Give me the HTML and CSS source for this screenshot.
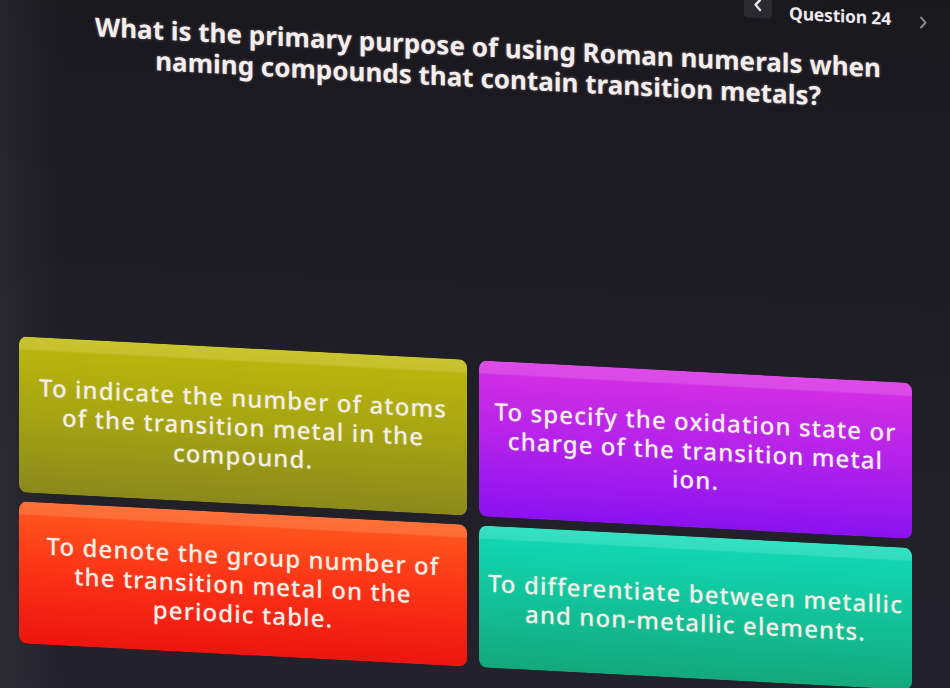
FILE: index.html
```html
<!DOCTYPE html>
<html lang="en">
<head>
<meta charset="utf-8">
<title>Question 24</title>
<link rel="stylesheet" href="styles.css">
</head>
<body>
<div class="screen">
  <header class="topbar">
    <button class="nav nav-prev" aria-label="Previous">
      <svg width="12" height="14" viewBox="0 0 12 14"><path d="M8 2 L3.5 7 L8 12" fill="none" stroke="#e8e4e8" stroke-width="2.4" stroke-linecap="round" stroke-linejoin="round"/></svg>
    </button>
    <span class="qnum">Question 24</span>
    <button class="nav nav-next" aria-label="Next">
      <svg width="12" height="14" viewBox="0 0 12 14"><path d="M4 2 L8.5 7 L4 12" fill="none" stroke="#8a8890" stroke-width="2" stroke-linecap="round" stroke-linejoin="round"/></svg>
    </button>
  </header>
  <h1 class="question">What is the primary purpose of using Roman numerals when<br>naming compounds that contain transition metals?</h1>
  <div class="answers">
    <div class="card olive"><p>To indicate the number of atoms<br>of the transition metal in the<br>compound.</p></div>
    <div class="card purple"><p>To specify the oxidation state or<br>charge of the transition metal<br>ion.</p></div>
    <div class="card red"><p>To denote the group number of<br>the transition metal on the<br>periodic table.</p></div>
    <div class="card green"><p>To differentiate between metallic<br>and non-metallic elements.</p></div>
  </div>
</div>
</body>
</html>
```
FILE: styles.css
```css
html, body {
  margin: 0;
  padding: 0;
  height: 100%;
  overflow: hidden;
  background: #1c1b21;
}
body {
  font-family: "Noto Sans", "Liberation Sans", sans-serif;
  color: #f3ece8;
}
.screen {
  width: 950px;
  height: 760px;
  background: linear-gradient(to right, rgba(60,60,66,0.35), rgba(0,0,0,0) 60px),
              linear-gradient(to bottom, #19181d 0%, #201e26 55%, #24222c 100%);
  transform: skewY(3deg);
  transform-origin: 950px 0;
  display: flex;
  flex-direction: column;
}
.topbar {
  display: flex;
  justify-content: flex-end;
  align-items: flex-start;
  height: 34px;
  padding: 11px 17px 0 0;
  box-sizing: border-box;
}
.nav {
  border: 0;
  padding: 0;
  display: flex;
  align-items: center;
  justify-content: center;
  background: transparent;
}
.nav-prev {
  width: 28px;
  height: 22px;
  border-radius: 4px;
  background: #2a2930;
  margin-right: 17px;
  margin-top: -5px;
  align-items: flex-start;
  padding-top: 2px;
  box-sizing: border-box;
}
.nav-next {
  width: 20px;
  height: 22px;
  margin-left: 22px;
  margin-top: 2px;
}
.qnum {
  font-weight: 700;
  font-size: 17.5px;
  line-height: 20px;
  color: #ece8ee;
  letter-spacing: -0.2px;
}
.question {
  margin: 22px 0 0 0;
  padding: 0 0 0 26px;
  font-size: 26px;
  line-height: 31px;
  font-weight: 700;
  text-align: center;
  white-space: nowrap;
  color: #f5eeee;
  text-shadow: 0 0 3px rgba(255,220,230,0.35);
}
.answers {
  margin-top: auto;
  margin-bottom: 68px;
  margin-left: 19px;
  display: grid;
  grid-template-columns: 448px 433px;
  grid-template-rows: 156px 142px;
  column-gap: 12px;
  row-gap: 9px;
}
.card {
  border-radius: 8px;
  display: flex;
  align-items: center;
  justify-content: center;
  padding: 0 4px;
}
.card p {
  margin: 0;
  text-align: center;
  font-size: 24px;
  line-height: 29px;
  font-weight: 500;
  letter-spacing: 1.1px;
  white-space: nowrap;
  color: #f4efe6;
  text-shadow: 0 0 2px rgba(255,255,255,0.25);
}
.olive {
  background: linear-gradient(to bottom, rgba(255,255,190,0.18) 12px, rgba(0,0,0,0) 14px),
              linear-gradient(to bottom, #bcb80e 0%, #a6a412 50%, #8b891c 100%);
}
.purple {
  background: linear-gradient(to bottom, rgba(255,200,255,0.18) 12px, rgba(0,0,0,0) 14px),
              linear-gradient(to bottom, #d630e2 0%, #b322ea 50%, #8a12f0 100%);
}
.red {
  background: linear-gradient(to bottom, rgba(255,220,180,0.18) 12px, rgba(0,0,0,0) 14px),
              linear-gradient(to bottom, #ff5a1e 0%, #fb3216 50%, #ec1510 100%);
}
.green {
  background: linear-gradient(to bottom, rgba(200,255,240,0.18) 12px, rgba(0,0,0,0) 14px),
              linear-gradient(to bottom, #12dab6 0%, #12c29a 50%, #14a87a 100%);
}
```
